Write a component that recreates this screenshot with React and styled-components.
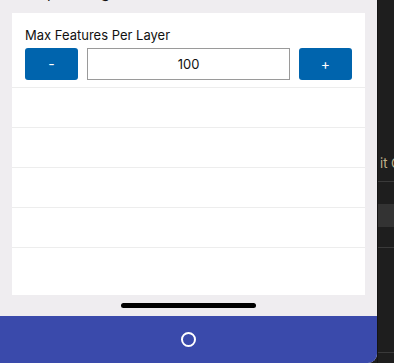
import React from 'react';
import styled, { createGlobalStyle } from 'styled-components';

const GlobalStyle = createGlobalStyle`
	html, body {
		margin: 0;
		padding: 0;
		background: #1e1e1e;
		font-family: "Inter", "Liberation Sans", sans-serif;
	}
`;

const Screen = styled.div`
	display: flex;
	width: 394px;
	height: 363px;
	overflow: hidden;
	background: #1e1e1e;
`;

const Phone = styled.div`
	display: flex;
	flex-direction: column;
	width: 377px;
	height: 363px;
	background: #efedf0;
	border-bottom-right-radius: 9px;
	overflow: hidden;
	flex-shrink: 0;
`;

const Heading = styled.div`
	height: 13px;
	overflow: hidden;
	padding-left: 25px;

	span {
		display: block;
		margin-top: -15px;
		font-size: 15px;
		line-height: 15px;
		color: #111;
	}
`;

const Card = styled.div`
	margin: 0 12px;
	height: 282px;
	background: #fff;
	display: flex;
	flex-direction: column;
`;

const Field = styled.div`
	padding: 12px 13px 7px;
	border-bottom: 1px solid #ededed;
`;

const Label = styled.div`
	font-size: 13px;
	line-height: 20px;
	color: #111;
	margin-bottom: 3px;
`;

const Stepper = styled.div`
	display: flex;
	gap: 9px;
	height: 32px;
`;

const StepButton = styled.button`
	width: 53px;
	border: none;
	border-radius: 3px;
	background: #0064ad;
	color: #fff;
	font-family: inherit;
	font-size: 14px;
	padding: 0 0 2px;
`;

const ValueBox = styled.div`
	flex: 1;
	display: flex;
	align-items: center;
	justify-content: center;
	border: 1px solid #9a9a9a;
	font-size: 13px;
	color: #111;
`;

const Row = styled.div`
	height: ${p => p.$h || 40}px;
	border-bottom: ${p => (p.$last ? 'none' : '1px solid #ededed')};
	box-sizing: border-box;
`;

const HomeArea = styled.div`
	height: 21px;
	display: flex;
	align-items: center;
	justify-content: center;
`;

const HomeIndicator = styled.div`
	width: 135px;
	height: 5px;
	border-radius: 3px;
	background: #000;
`;

const NavBar = styled.div`
	flex: 1;
	background: #3a4aab;
	display: flex;
	align-items: center;
	justify-content: center;
`;

const HomeCircle = styled.div`
	width: 11px;
	height: 11px;
	border: 2px solid #fff;
	border-radius: 50%;
`;

const Side = styled.div`
	flex: 1;
	display: flex;
	flex-direction: column;
	border-left: 1px solid #141414;
`;

const SideText = styled.div`
	margin-top: 154px;
	height: 18px;
	font-size: 13px;
	line-height: 18px;
	color: #c2b48e;
	white-space: nowrap;
	overflow: hidden;
	padding-left: 2px;
`;

const SideLine = styled.div`
	height: ${p => p.$h || 1}px;
	margin-top: ${p => p.$gap}px;
	background: ${p => p.$c || '#3a3a3a'};
`;

export default function App() {
	return (
		<>
			<GlobalStyle />
			<Screen>
				<Phone>
					<Heading><span>Map Settings</span></Heading>
					<Card>
						<Field>
							<Label>Max Features Per Layer</Label>
							<Stepper>
								<StepButton>-</StepButton>
								<ValueBox>100</ValueBox>
								<StepButton>+</StepButton>
							</Stepper>
						</Field>
						<Row />
						<Row />
						<Row />
						<Row />
						<Row $h={47} $last />
					</Card>
					<HomeArea><HomeIndicator /></HomeArea>
					<NavBar><HomeCircle /></NavBar>
				</Phone>
				<Side>
					<SideText>it C</SideText>
					<SideLine $gap={9} />
					<SideLine $gap={22} $h={23} $c="#333" />
					<SideLine $gap={20} />
					<SideLine $gap={104} />
				</Side>
			</Screen>
		</>
	);
}
